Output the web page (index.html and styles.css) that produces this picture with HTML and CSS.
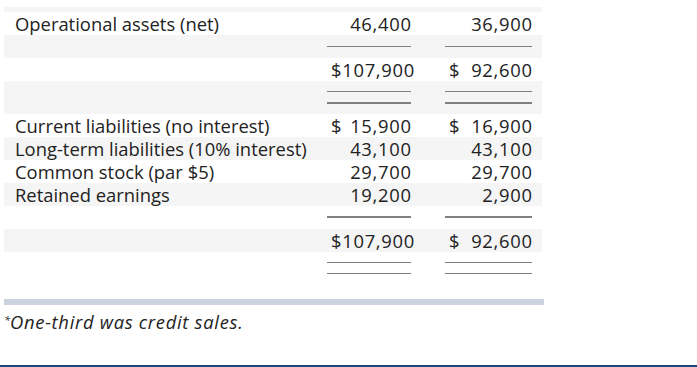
FILE: index.html
```html
<!DOCTYPE html>
<html>
<head>
<meta charset="utf-8">
<link rel="stylesheet" href="styles.css">
</head>
<body>
<div class="page">
  <div class="sheet">
    <div class="gap-top"></div>
    <div class="row shade stub"></div>
    <div class="row">
      <span class="label">Operational assets (net)</span>
      <span class="num">46,400</span>
      <span class="num">36,900</span>
    </div>
    <div class="row shade">
      <span class="label"></span>
      <span class="rule"><i class="l1 t11"></i></span>
      <span class="rule"><i class="l1 t11"></i></span>
    </div>
    <div class="row">
      <span class="label"></span>
      <span class="num money"><b>$107,900</b></span>
      <span class="num money"><b>$</b><b>92,600</b></span>
    </div>
    <div class="row shade tall">
      <span class="label"></span>
      <span class="rule"><i class="l1 t10"></i><i class="l2 t10b"></i></span>
      <span class="rule"><i class="l1 t10"></i><i class="l2 t10b"></i></span>
    </div>
    <div class="row">
      <span class="label">Current liabilities (no interest)</span>
      <span class="num money"><b>$</b><b>15,900</b></span>
      <span class="num money"><b>$</b><b>16,900</b></span>
    </div>
    <div class="row shade">
      <span class="label">Long-term liabilities (10% interest)</span>
      <span class="num">43,100</span>
      <span class="num">43,100</span>
    </div>
    <div class="row">
      <span class="label">Common stock (par $5)</span>
      <span class="num">29,700</span>
      <span class="num">29,700</span>
    </div>
    <div class="row shade">
      <span class="label">Retained earnings</span>
      <span class="num">19,200</span>
      <span class="num">2,900</span>
    </div>
    <div class="row">
      <span class="label"></span>
      <span class="rule"><i class="l2 t10"></i></span>
      <span class="rule"><i class="l2 t10"></i></span>
    </div>
    <div class="row shade">
      <span class="label"></span>
      <span class="num money"><b>$107,900</b></span>
      <span class="num money"><b>$</b><b>92,600</b></span>
    </div>
    <div class="row tall">
      <span class="label"></span>
      <span class="rule"><i class="l1 t10"></i><i class="l1 t10c"></i></span>
      <span class="rule"><i class="l1 t10"></i><i class="l1 t10c"></i></span>
    </div>
  </div>
  <div class="bar"></div>
  <p class="note"><sup>*</sup>One-third was credit sales.</p>
</div>
<div class="bottom-line"></div>
</body>
</html>
```

FILE: styles.css
```css
html, body {
  margin: 0;
  padding: 0;
  background: #fff;
}

body {
  width: 697px;
  height: 367px;
  overflow: hidden;
  position: relative;
  font-family: "Open Sans", "Liberation Sans", sans-serif;
  color: #222;
}

.page {
  padding-left: 4px;
}

.sheet {
  width: 538px;
}

.gap-top {
  height: 7px;
}

.row {
  display: grid;
  grid-template-columns: minmax(0, 1fr) 84px 87px;
  column-gap: 34px;
  padding: 0 10px 0 11px;
  height: 23px;
  align-items: center;
  font-size: 18.4px;
  line-height: 23px;
}

.row.stub {
  height: 5px;
}

.row.tall {
  height: 33px;
}

.shade {
  background: #f5f5f5;
}

.label {
  white-space: nowrap;
  min-width: 0;
}

.num {
  text-align: right;
  white-space: nowrap;
  letter-spacing: 0.7px;
  margin-right: -0.7px;
}

.num.money {
  display: flex;
  justify-content: space-between;
  padding-left: 4px;
}

.num.money b {
  font-weight: normal;
}

.num.money b:only-child {
  margin-left: auto;
}

.rule {
  position: relative;
  height: 100%;
  align-self: stretch;
}

.rule i {
  position: absolute;
  left: 0;
  right: 0;
  background: #808080;
}

.l1 { height: 1px; }
.l2 { height: 2px; }

.t11 { top: 11px; }
.t10 { top: 10px; }
.t10b { top: 21px; }
.t10c { top: 21px; }

.bar {
  width: 540px;
  height: 6px;
  margin-top: 14px;
  background: #cdd3de;
}

.note {
  margin: 5px 0 0;
  font-size: 18.4px;
  font-style: italic;
  line-height: 24px;
  letter-spacing: 0.7px;
}

.note sup {
  font-size: 11px;
  vertical-align: 5px;
  line-height: 0;
  letter-spacing: 0;
}

.bottom-line {
  position: absolute;
  left: 0;
  right: 0;
  top: 365px;
  height: 2px;
  background: #1b4a7a;
}
```
